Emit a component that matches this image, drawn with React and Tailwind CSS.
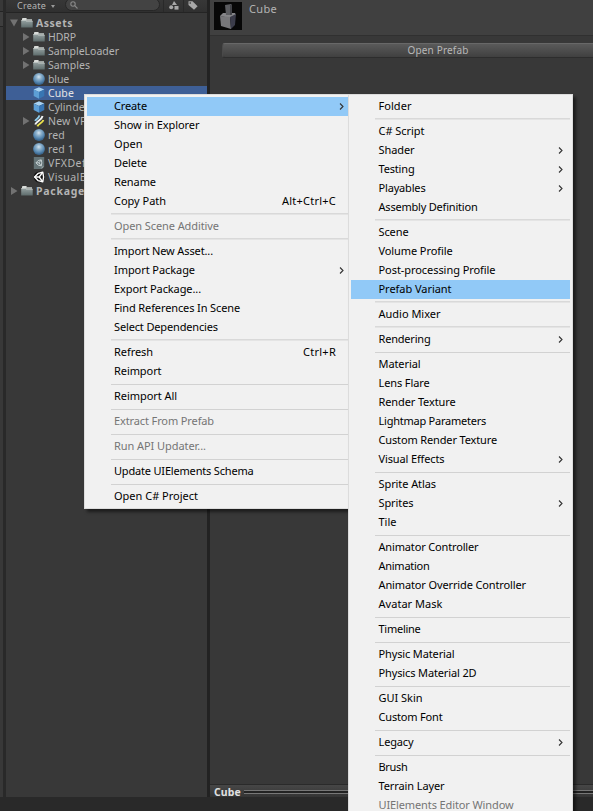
import { useLayoutEffect, useRef } from "react";

function Label({ text, w, className = "" }) {
  const ref = useRef(null);
  useLayoutEffect(() => {
    const el = ref.current;
    const fit = () => {
      el.style.letterSpacing = "0px";
      const natural = el.getBoundingClientRect().width;
      el.style.letterSpacing = `${(w - natural) / text.length}px`;
    };
    fit();
    document.fonts?.ready.then(fit);
  }, [text, w]);
  return (
    <span ref={ref} className={`inline-block shrink-0 whitespace-pre ${className}`}>
      {text}
    </span>
  );
}

// [label, width, option]; null is a separator
const assetMenu = [
  ["Create", 33, { sub: true, active: true }],
  ["Show in Explorer", 85.5],
  ["Open", 28.5],
  ["Delete", 33],
  ["Rename", 42],
  ["Copy Path", 52, { keys: "Alt+Ctrl+C", kw: 54 }],
  null,
  ["Open Scene Additive", 105, { off: true }],
  null,
  ["Import New Asset...", 99],
  ["Import Package", 81, { sub: true }],
  ["Export Package...", 87],
  ["Find References In Scene", 126],
  ["Select Dependencies", 104],
  null,
  ["Refresh", 39, { keys: "Ctrl+R", kw: 33 }],
  ["Reimport", 47.5],
  null,
  ["Reimport All", 63],
  null,
  ["Extract From Prefab", 100, { off: true }],
  null,
  ["Run API Updater...", 92, { off: true }],
  null,
  ["Update UIElements Schema", 139.5],
  null,
  ["Open C# Project", 84],
];

const createMenu = [
  ["Folder", 33],
  null,
  ["C# Script", 46],
  ["Shader", 36, { sub: true }],
  ["Testing", 36, { sub: true }],
  ["Playables", 47, { sub: true }],
  ["Assembly Definition", 99],
  null,
  ["Scene", 30],
  ["Volume Profile", 74],
  ["Post-processing Profile", 117],
  ["Prefab Variant", 73, { active: true }],
  null,
  ["Audio Mixer", 62],
  null,
  ["Rendering", 52, { sub: true }],
  null,
  ["Material", 42],
  ["Lens Flare", 51],
  ["Render Texture", 77],
  ["Lightmap Parameters", 107.5],
  ["Custom Render Texture", 118.5],
  ["Visual Effects", 66, { sub: true }],
  null,
  ["Sprite Atlas", 57.5],
  ["Sprites", 35, { sub: true }],
  ["Tile", 18],
  null,
  ["Animator Controller", 100],
  ["Animation", 51],
  ["Animator Override Controller", 147.5],
  ["Avatar Mask", 64],
  null,
  ["Timeline", 42],
  null,
  ["Physic Material", 76],
  ["Physics Material 2D", 98],
  null,
  ["GUI Skin", 44],
  ["Custom Font", 64],
  null,
  ["Legacy", 35, { sub: true }],
  null,
  ["Brush", 29],
  ["Terrain Layer", 66],
  ["UIElements Editor Window", 135, { off: true }],
];

function Menu({ items, className, inset, arrowGap }) {
  return (
    <div className={`absolute bg-[#f1f1f1] font-['Noto_Sans','Open_Sans',sans-serif] text-[11px] text-black ${className}`}>
      {items.map((item, i) => {
        if (!item) {
          return (
            <div key={i} className="h-[6px] pt-[2px] pl-[24px]">
              <div className={i < 15 ? "h-[2px] border-t border-[#d9d9d9] bg-[#e4e4e4]" : "mt-px h-px bg-[#d2d2d2]"} />
            </div>
          );
        }
        const [text, w, o = {}] = item;
        return (
          <div
            key={i}
            className={`flex h-[19px] items-center leading-[17px] ${inset} ${o.active ? "bg-[#91c9f7]" : ""} ${o.off ? "text-[#757575]" : ""}`}
          >
            <Label text={text} w={w} className="pb-[2px]" />
            <span className="grow" />
            {o.keys && <Label text={o.keys} w={o.kw} className="mr-[12px] pb-[2px]" />}
            {o.sub && (
              <svg className={`mb-px h-[7px] w-[5px] shrink-0 ${arrowGap}`} viewBox="0 0 5 7" fill="none" stroke="#333" strokeWidth="1.1">
                <path d="M1 0.5 L4 3.5 L1 6.5" />
              </svg>
            )}
          </div>
        );
      })}
    </div>
  );
}

function Arrow({ open }) {
  return (
    <svg className="h-[8px] w-[8px] shrink-0" viewBox="0 0 8 8" fill="#727272">
      <path d={open ? "M0 0.5 H8 L4 7.5 Z" : "M1 0 L7.5 4 L1 8 Z"} />
    </svg>
  );
}

function Folder() {
  return (
    <svg className="h-[12px] w-[12px] shrink-0" viewBox="0 0 12 12">
      <defs>
        <linearGradient id="folder" x1="0" y1="0" x2="0" y2="1">
          <stop offset="0" stopColor="#96a2a2" />
          <stop offset="1" stopColor="#5d6b6b" />
        </linearGradient>
      </defs>
      <path d="M1 3 V1.8 L1.6 1 H5.2 L6 2 H11 V4 H1 Z" fill="#d9dcd9" />
      <path d="M5.4 2.6 H11 V3.4 H5.4 Z" fill="#4c5555" />
      <path d="M0.2 3.2 H5 L5.8 4 H11.7 V10.6 H0.2 Z" fill="url(#folder)" />
      <path d="M0.2 3.5 H4.8 L5.5 4.2 H11.7" fill="none" stroke="#c9cecc" strokeWidth="0.7" />
    </svg>
  );
}

function Sphere() {
  return (
    <svg className="h-[12px] w-[12px] shrink-0" viewBox="0 0 12 12">
      <defs>
        <radialGradient id="ball" cx="0.48" cy="0.32" r="0.62">
          <stop offset="0" stopColor="#d5e4ee" />
          <stop offset="0.35" stopColor="#8fb2cc" />
          <stop offset="0.75" stopColor="#5687b0" />
          <stop offset="1" stopColor="#3a668e" />
        </radialGradient>
      </defs>
      <circle cx="6" cy="6" r="5.9" fill="url(#ball)" />
    </svg>
  );
}

function CubeIcon() {
  return (
    <svg className="h-[12px] w-[12px] shrink-0" viewBox="0 0 12 12">
      <path d="M6 0.3 L11.3 2.6 L6 5 L0.7 2.6 Z" fill="#a8d2f1" />
      <path d="M0.7 2.6 L6 5 V11.8 L0.7 9.1 Z" fill="#5d9fd6" />
      <path d="M11.3 2.6 L6 5 V11.8 L11.3 9.1 Z" fill="#3876b3" />
    </svg>
  );
}

function VfxIcon() {
  return (
    <svg className="h-[12px] w-[12px] shrink-0" viewBox="0 0 12 12" fill="none" strokeWidth="1.9">
      <path d="M2.2 6 C2.8 4 5.8 3.4 6.4 0.4" stroke="#8fcdec" />
      <path d="M2.2 9.6 C3 6.4 8.6 5.4 9.6 1" stroke="#f2f5f6" />
      <path d="M4.4 11.4 C5.4 8.6 9.4 8.4 10.4 5" stroke="#eae14c" />
    </svg>
  );
}

function UnityMark({ color }) {
  return (
    <g fill="none" stroke={color} strokeWidth="1.4" strokeLinejoin="round">
      <path d="M9.8 1.3 L5 2.4 L1.6 6 L5 9.6 L9.8 10.7 L10.6 6 Z" />
      <path d="M1.6 6 H6.2 L9.3 1.8 M6.2 6 L9.3 10.2" />
    </g>
  );
}

function AssetIcon({ kind }) {
  if (kind === "folder") return <Folder />;
  if (kind === "ball") return <Sphere />;
  if (kind === "cube") return <CubeIcon />;
  if (kind === "vfx") return <VfxIcon />;
  if (kind === "page")
    return (
      <svg className="h-[12px] w-[12px] shrink-0" viewBox="0 0 12 12">
        <path d="M0.8 0 H11.2 V9.4 L8.6 12 H0.8 Z" fill="#657477" />
        <path d="M11.2 9.4 H8.6 V12 Z" fill="#98a3a5" />
        <g transform="translate(2 2) scale(0.64)">
          <UnityMark color="#cfd8da" />
        </g>
      </svg>
    );
  return (
    <svg className="h-[12px] w-[12px] shrink-0" viewBox="0 0 12 12">
      <circle cx="6.3" cy="6" r="5.6" fill="#111" />
      <UnityMark color="#fff" />
    </svg>
  );
}

const tree = [
  ["Assets", 37, "folder", "open", 0],
  ["HDRP", 28, "folder", "closed", 1],
  ["SampleLoader", 71, "folder", "closed", 1],
  ["Samples", 42, "folder", "closed", 1],
  ["blue", 21, "ball", null, 1],
  ["Cube", 26, "cube", null, 1],
  ["Cylinder", 41, "cube", null, 1],
  ["New VFX", 44, "vfx", "closed", 1],
  ["red", 17, "ball", null, 1],
  ["red 1", 26, "ball", null, 1],
  ["VFXDefault", 59, "page", null, 1],
  ["VisualEffect", 62, "unity", null, 1],
  ["Packages", 55, "folder", "closed", 0],
];

function ProjectPanel() {
  return (
    <div className="flex h-[797px] w-[201px] shrink-0 flex-col overflow-hidden bg-[#383838]">
      <div className="flex h-[13px] shrink-0 items-start border-b border-[#242424] bg-gradient-to-b from-[#373737] to-[#303030] pl-[11px]">
        <Label text="Create" w={29} className="text-[9px] leading-[11px] text-[#b4b4b4]" />
        <svg className="mt-[5px] ml-[5px] h-[3px] w-[4px]" viewBox="0 0 4 3" fill="#999">
          <path d="M0 0 H4 L2 3 Z" />
        </svg>
        <div className="mt-[-2px] ml-[10px] flex h-[13px] w-[95px] items-center rounded-full border border-[#272727] bg-[#434343] pl-[4px]">
          <svg className="mt-px h-[8px] w-[8px]" viewBox="0 0 8 8" fill="none" stroke="#898989" strokeWidth="1.1">
            <circle cx="3" cy="3" r="2.2" />
            <path d="M4.7 4.7 L7.5 7.5" />
          </svg>
        </div>
        <div className="ml-[3px] h-full w-px bg-[#292929]" />
        <svg className="mt-px ml-[5px] h-[9px] w-[10px]" viewBox="0 0 10 9" fill="#a8a8a8">
          <path d="M5 0 L8 4 H3 Z" />
          <circle cx="2.2" cy="6.2" r="2" />
          <path d="M5.5 5 H9.5 V8.6 H5.5 Z" />
        </svg>
        <div className="ml-[4px] h-full w-px bg-[#292929]" />
        <svg className="mt-px ml-[4px] h-[9px] w-[10px]" viewBox="0 0 10 9">
          <path d="M0.5 0.3 H4.5 L9.6 5.2 L6 8.8 L0.5 4 Z" fill="#a8a8a8" />
          <circle cx="2.2" cy="2" r="0.8" fill="#333" />
        </svg>
      </div>
      <div className="flex flex-col pt-[3px]">
        {tree.map(([name, w, kind, arrow, depth]) => (
          <div
            key={name}
            className={`flex h-[14px] shrink-0 items-center leading-[14px] ${depth ? "pl-[15px]" : "pl-[3px]"} ${
              name === "Cube" ? "bg-[#3e5f96] text-[#e4e4e4]" : "text-[#b4b4b4]"
            }`}
          >
            <div className="flex w-[12px] shrink-0 items-center pl-px">{arrow && <Arrow open={arrow === "open"} />}</div>
            <AssetIcon kind={kind} />
            <Label text={name} w={w} className={`ml-[3px] text-[10.5px] ${depth ? "" : "font-bold"}`} />
          </div>
        ))}
      </div>
    </div>
  );
}

function Inspector() {
  return (
    <div className="flex h-[797px] grow flex-col overflow-hidden bg-[#383838]">
      <div className="flex h-[36px] shrink-0 items-start border-b border-[#303030] bg-[#404040] pt-[2px] pl-[4px]">
        <svg className="h-[28px] w-[28px]" viewBox="0 0 28 28">
          <rect width="28" height="28" fill="#070707" />
          <path d="M6 14 L9 11 H21 L22 13 L16 16 Z" fill="#858588" />
          <path d="M11 3 L17 2 L18 3 V13 H12 Z" fill="#5b5c60" />
          <path d="M16 3 L18 3 V12.5 L16 13 Z" fill="#414247" />
          <path d="M6 14 L16 15 L17 27 L7 24 Z" fill="#77777a" />
          <path d="M16 15 L22 12 L21 23 L17 27 Z" fill="#3b3c4a" />
        </svg>
        <Label text="Cube" w={28} className="ml-[7px] text-[11px] leading-[13px] text-[#b4b4b4]" />
      </div>
      <div className="flex pt-[7px] pl-[12px]">
        <div className="flex h-[15px] w-[432px] shrink-0 items-center justify-center rounded-[3px] border border-t-[#686868] border-r-[#4a4a4a] border-b-[#2d2d2d] border-l-[#4a4a4a] bg-gradient-to-b from-[#5a5a5a] to-[#404040]">
          <Label text="Open Prefab" w={61} className="text-[10px] leading-[13px] text-[#b8b8b8]" />
        </div>
      </div>
      <div className="grow" />
      <div className="flex h-[13px] shrink-0 items-center border-t border-[#2a2a2a] bg-gradient-to-b from-[#474747] to-[#343434] pt-[2px] pl-[4px]">
        <Label text="Cube" w={27} className="text-[10.5px] leading-[12px] font-bold text-[#e0e0e0]" />
        <div className="ml-[3px] h-[4px] grow border-y border-[#777] bg-[#222]" />
      </div>
    </div>
  );
}

export default function App() {
  return (
    <div className="relative h-[811px] w-[593px] overflow-hidden bg-[#292929] font-['Noto_Sans','Open_Sans',sans-serif]">
      <div className="flex">
        <div className="mr-[3px] flex h-[797px] w-[3px] shrink-0 flex-col bg-[#383838]">
          <div className="h-[12px] border-b border-[#242424]" />
          <div className="h-[15px] border-b border-[#242424] bg-[#3e3e3e]" />
        </div>
        <ProjectPanel />
        <div className="w-[3px] shrink-0 bg-[#222]" />
        <Inspector />
      </div>
      <Menu
        items={assetMenu}
        inset="pl-[27px]"
        arrowGap="mr-[4px]"
        className="top-[94px] left-[84px] w-[265px] border border-[#dcdcdc] py-[2px] pr-0 pl-[2px] shadow-[3px_3px_3px_rgba(0,0,0,0.5)]"
      />
      <Menu
        items={createMenu}
        inset="pl-[27.5px]"
        arrowGap="mr-[7px]"
        className="top-[94px] left-[348px] h-[740px] w-[225px] border border-[#dcdcdc] px-[2px] py-[2px] shadow-[3px_3px_3px_rgba(0,0,0,0.5)]"
      />
    </div>
  );
}
